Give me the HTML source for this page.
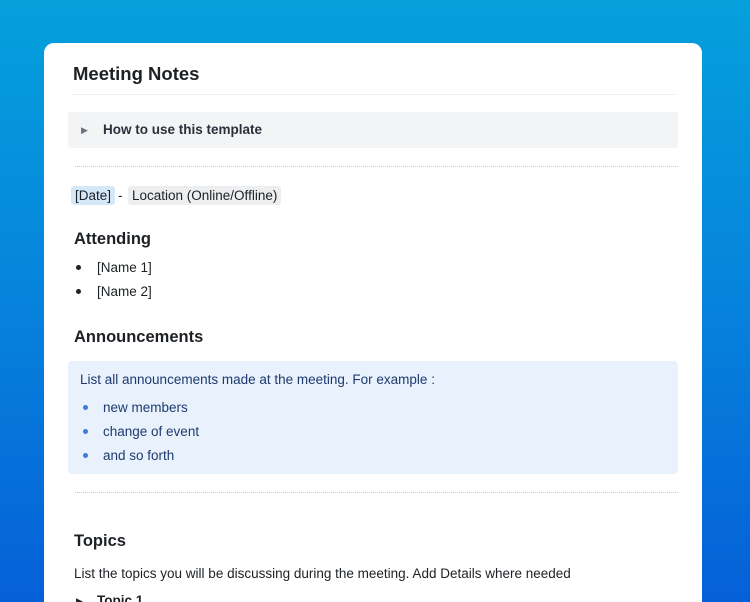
<!DOCTYPE html>
<html><head><meta charset="utf-8"><style>
*{margin:0;padding:0;box-sizing:border-box}
html,body{width:750px;height:602px;overflow:hidden}
body{background:linear-gradient(180deg,#05a0dc 0%,#0683dc 50%,#0560d8 100%);font-family:"Liberation Sans",sans-serif;color:#172b4d;position:relative}
.card{position:absolute;left:44px;top:43px;width:658px;height:559px;background:#fff;border-radius:10px 10px 0 0;overflow:hidden}
.a{position:absolute;white-space:nowrap}
.t{font-size:13.5px;color:#1d2125}
.h{font-size:16.5px;font-weight:bold;color:#1d2125}
.dot{position:absolute;width:5px;height:5px;border-radius:50%}
.dash{position:absolute;left:31px;width:603px;border-top:1px dotted #c8ccd2}
</style></head><body>
<div class="card">
<div class="a" style="left:29px;top:20px;font-size:18.5px;font-weight:bold;color:#1d2125">Meeting Notes</div>
<div style="position:absolute;left:29px;top:51px;width:603px;border-top:1px solid #eceef0"></div>
<div style="position:absolute;left:24px;top:69px;width:610px;height:36px;background:#f2f4f6;border-radius:3px"></div>
<div class="a" style="left:37px;top:82px;font-size:9px;color:#6b7280">▶</div>
<div class="a" style="left:59px;top:79px;font-size:13.5px;font-weight:bold;color:#2b313a">How to use this template</div>
<div class="dash" style="top:123px"></div>
<div class="a t" style="left:27px;top:143px;background:#d5e8f8;padding:2px 4px;border-radius:3px">[Date]</div>
<div class="a t" style="left:74px;top:145px">-</div>
<div class="a t" style="left:84px;top:143px;background:#eceef0;padding:2px 4px;border-radius:3px">Location (Online/Offline)</div>
<div class="a h" style="left:30px;top:187px">Attending</div>
<div class="dot" style="left:32px;top:222px;background:#1d2125"></div>
<div class="a t" style="left:53px;top:217px">[Name 1]</div>
<div class="dot" style="left:32px;top:246px;background:#1d2125"></div>
<div class="a t" style="left:53px;top:241px">[Name 2]</div>
<div class="a h" style="left:30px;top:285px">Announcements</div>
<div style="position:absolute;left:24px;top:318px;width:610px;height:113px;background:#e8f1fc;border-radius:4px"></div>
<div class="a t" style="left:36px;top:329px;color:#1e3a6e">List all announcements made at the meeting. For example :</div>
<div class="dot" style="left:39px;top:362px;background:#3d7be0"></div>
<div class="a t" style="left:59px;top:357px;color:#1e3a6e">new members</div>
<div class="dot" style="left:39px;top:386px;background:#3d7be0"></div>
<div class="a t" style="left:59px;top:381px;color:#1e3a6e">change of event</div>
<div class="dot" style="left:39px;top:410px;background:#3d7be0"></div>
<div class="a t" style="left:59px;top:405px;color:#1e3a6e">and so forth</div>
<div class="dash" style="top:449px"></div>
<div class="a h" style="left:30px;top:489px">Topics</div>
<div class="a t" style="left:30px;top:523px">List the topics you will be discussing during the meeting. Add Details where needed</div>
<div class="a" style="left:32px;top:553px;font-size:9px;color:#1d2125">▶</div>
<div class="a" style="left:53px;top:550px;font-size:13.5px;font-weight:bold;color:#1d2125">Topic 1</div>
</div>
</body></html>
